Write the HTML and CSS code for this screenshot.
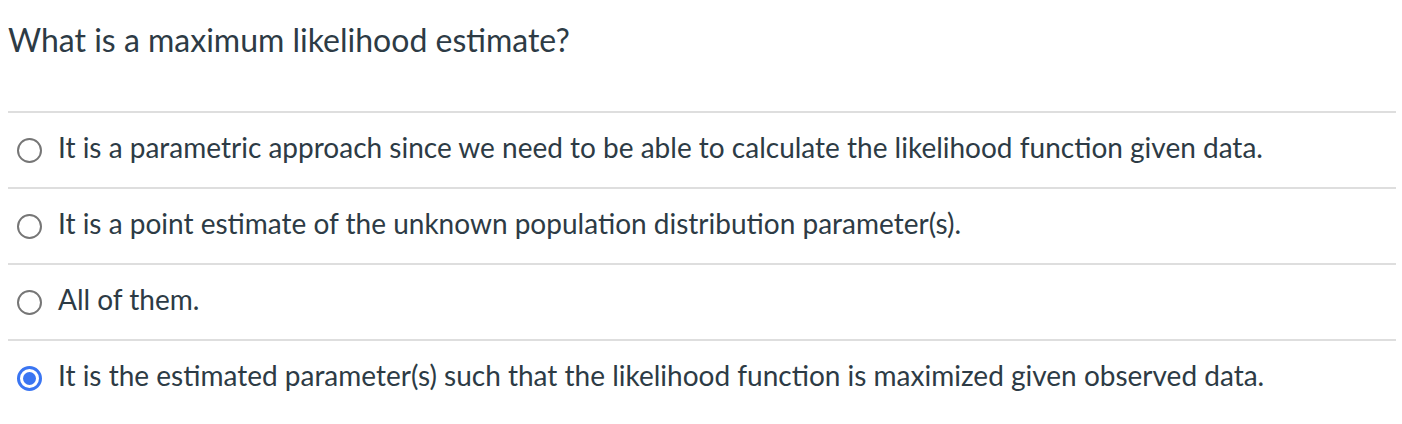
FILE: index.html
```html
<!DOCTYPE html>
<html>
<head>
<meta charset="utf-8">
<link rel="stylesheet" href="styles.css">
</head>
<body>
<div class="question">
  <div class="question-text">What is a maximum likelihood estimate?</div>
  <div class="answers">
    <label class="answer"><span class="radio"></span><span class="label">It is a parametric approach since we need to be able to calculate the likelihood function given data.</span></label>
    <label class="answer"><span class="radio"></span><span class="label">It is a point estimate of the unknown population distribution parameter(s).</span></label>
    <label class="answer"><span class="radio"></span><span class="label">All of them.</span></label>
    <label class="answer"><span class="radio checked"></span><span class="label">It is the estimated parameter(s) such that the likelihood function is maximized given observed data.</span></label>
  </div>
</div>
</body>
</html>
```

FILE: styles.css
```css
html, body {
  margin: 0;
  padding: 0;
  background: #ffffff;
}
body {
  font-family: Lato, "Noto Sans", sans-serif;
  color: #2d3b45;
}
.question {
  padding: 0 6px 0 8px;
}
.question-text {
  font-size: 32px;
  line-height: 38px;
  padding-top: 21px;
  height: 113px;
  box-sizing: border-box;
  border-bottom: 2px solid #dedede;
}
.answer {
  display: flex;
  align-items: center;
  height: 74px;
  border-bottom: 2px solid #dedede;
}
.answer:last-child {
  border-bottom: none;
}
.radio {
  width: 21px;
  height: 21px;
  border: 2px solid #767676;
  border-radius: 50%;
  margin-left: 9px;
  margin-right: 16px;
  flex: none;
  box-sizing: content-box;
  position: relative;
}
.radio.checked {
  border: 3px solid #3a75f2;
  width: 19px;
  height: 19px;
}
.radio.checked::after {
  content: "";
  position: absolute;
  left: 3px;
  top: 3px;
  width: 13px;
  height: 13px;
  border-radius: 50%;
  background: #3a75f2;
}
.label {
  font-size: 28px;
  line-height: 34px;
  margin-bottom: 6px;
}
```
